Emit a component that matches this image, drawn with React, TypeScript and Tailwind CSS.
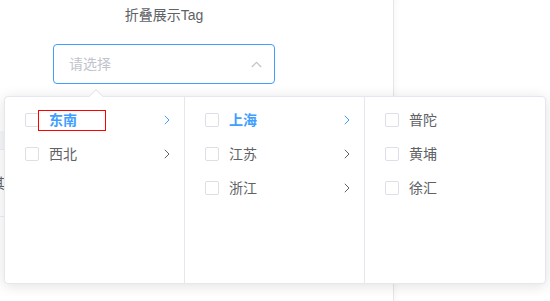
import React from 'react';

interface CascaderNode {
  label: string;
  active?: boolean;
  hasChildren?: boolean;
  focused?: boolean;
}

const columns: CascaderNode[][] = [
  [
    { label: '东南', active: true, hasChildren: true, focused: true },
    { label: '西北', hasChildren: true },
  ],
  [
    { label: '上海', active: true, hasChildren: true },
    { label: '江苏', hasChildren: true },
    { label: '浙江', hasChildren: true },
  ],
  [{ label: '普陀' }, { label: '黄埔' }, { label: '徐汇' }],
];

const ArrowRight = ({ active }: { active?: boolean }) => (
  <svg width="6" height="10" viewBox="0 0 6 10" fill="none" className="absolute right-[14px]">
    <path d="M0.8 0.8 L5 5 L0.8 9.2" stroke={active ? '#409eff' : '#606266'} strokeWidth="1" />
  </svg>
);

const App: React.FC = () => {
  return (
    <div
      className="relative w-[550px] h-[301px] overflow-hidden bg-white flex"
      style={{ fontFamily: '"Liberation Sans", "Noto Sans CJK SC", sans-serif' }}
    >
      {/* page behind the popper */}
      <div className="w-[393px] flex flex-col">
        <div className="pl-[53px] pt-[5px]">
          <div className="w-[222px] text-center text-[14px] leading-5 text-[#606266]">折叠展示Tag</div>
          <div className="mt-[19px] w-[222px] h-[40px] border border-[#409eff] rounded-[4px] flex items-center justify-between pl-[15px] pr-[12px]">
            <span className="text-[14px] text-[#c0c4cc]">请选择</span>
            <svg width="11" height="7" viewBox="0 0 11 7" fill="none">
              <path d="M0.8 6 L5.5 1.3 L10.2 6" stroke="#c0c4cc" strokeWidth="1.2" />
            </svg>
          </div>
        </div>
        <div className="mt-[47px] flex flex-col">
          <div className="h-[19px] bg-[#f5f7fa] border-b border-[#ebeef5]" />
          <div className="h-[67px] border-b border-[#ebeef5] flex items-center text-[14px] text-[#606266] -ml-[9px]">
            其他
          </div>
        </div>
      </div>
      <div className="flex-1 border-l border-[#e6e6e6] shadow-[inset_6px_0_8px_-6px_rgba(0,0,0,0.05)]" />

      {/* cascader popper */}
      <div className="absolute left-[4px] top-[96px] w-[542px] h-[188px] bg-white border border-[#e4e7ed] rounded-[4px] shadow-[0_2px_14px_0_rgba(0,0,0,0.12)] flex">
        <div className="absolute -top-[6px] left-[86px] w-[10px] h-[10px] rotate-45 bg-white border-l border-t border-[#e4e7ed]" />
        {columns.map((col, ci) => (
          <div
            key={ci}
            className={`relative w-[180px] py-[6px] flex flex-col ${ci < 2 ? 'border-r border-[#e4e7ed]' : 'flex-1'}`}
          >
            {col.map((node) => (
              <div key={node.label} className="relative h-[34px] pl-[20px] flex items-center">
                <span className="w-[14px] h-[14px] border border-[#dcdfe6] rounded-[2px] bg-white shrink-0" />
                <span
                  className={`h-[21px] flex items-center pl-[10px] text-[14px] ${
                    node.focused ? 'w-[68px] border border-[#f00] -ml-px' : ''
                  } ${node.active ? 'text-[#409eff] font-bold' : 'text-[#606266]'}`}
                >
                  {node.label}
                </span>
                {node.hasChildren && <ArrowRight active={node.active} />}
              </div>
            ))}
          </div>
        ))}
      </div>
    </div>
  );
};

export default App;
